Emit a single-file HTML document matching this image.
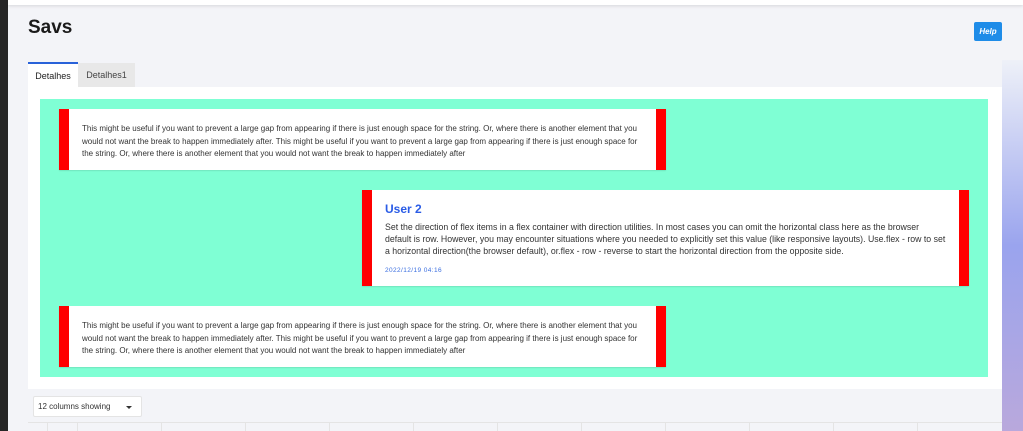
<!DOCTYPE html>
<html><head><meta charset="utf-8"><style>
*{margin:0;padding:0;box-sizing:border-box}
body{width:1023px;height:431px;overflow:hidden;background:#f3f4f8;font-family:"Liberation Sans",sans-serif;position:relative}
.abs{position:absolute}
.side{left:0;top:0;width:8px;height:431px;background:#262626}
.top{left:8px;top:0;width:1015px;height:5px;background:#fff;box-shadow:0 1px 3px rgba(0,0,0,.12)}
.grad{left:1002px;top:60px;width:21px;height:371px;background:linear-gradient(#eef1f8,#9aa4ee 50%,#b9a8dc)}
h1{position:absolute;left:28px;top:17px;font-size:19px;font-weight:bold;color:#1a1a1a}
.help{left:974px;top:22px;width:28px;height:19px;background:#1e8ce8;border-radius:2px;color:#fff;font-size:8px;font-weight:bold;font-style:italic;text-align:center;line-height:19px}
.tab1{left:28px;top:62px;width:50px;height:26px;background:#fff;border-top:2px solid #2962d9;font-size:9px;color:#222;text-align:center;line-height:24px}
.tab2{left:78px;top:63px;width:57px;height:25px;background:#e8e8e8;font-size:9px;color:#444;text-align:center;line-height:25px}
.panel{left:28px;top:87px;width:974px;height:302px;background:#fff}
.green{left:40px;top:99px;width:948px;height:278px;background:#7fffd4}
.card{position:absolute;background:#fff;border-left:10px solid #f00;border-right:10px solid #f00;width:607px;box-shadow:0 1px 1px rgba(0,0,0,.1)}
.t{font-size:8px;color:#333;line-height:12.5px;white-space:nowrap}
.u{font-size:12px;font-weight:bold;color:#2a5ce6}
.d{font-size:6.5px;color:#3b6fe0;letter-spacing:.4px}
.sel{left:33px;top:396px;width:109px;height:21px;background:#fff;border:1px solid #e4e4e4;border-radius:2px;font-size:8px;color:#333;line-height:20px;padding-left:4px}
.sel:after{content:"";position:absolute;right:9px;top:9px;border-left:3px solid transparent;border-right:3px solid transparent;border-top:3px solid #333}
.tbl{left:28px;top:422px;width:974px;height:9px;border-top:1px solid #e4e4e4}
.col{position:absolute;top:422px;height:9px;width:1px;background:#e4e4e4}
</style></head><body>
<div class="abs side"></div><div class="abs top"></div><div class="abs grad"></div>
<h1>Savs</h1>
<div class="abs help">Help</div>
<div class="abs tab1">Detalhes</div><div class="abs tab2">Detalhes1</div>
<div class="abs panel"></div>
<div class="abs green"></div>
<div class="card" style="left:59px;top:109px;height:61px;padding:14px 0 0 13px"><div class="t">This might be useful if you want to prevent a large gap from appearing if there is just enough space for the string. Or, where there is another element that you<br>would not want the break to happen immediately after. This might be useful if you want to prevent a large gap from appearing if there is just enough space for<br>the string. Or, where there is another element that you would not want the break to happen immediately after</div></div>
<div class="card" style="left:362px;top:190px;height:96px;padding:12px 0 0 13px"><div class="u">User 2</div><div class="t" style="font-size:8.75px;line-height:12.2px;margin-top:5px">Set the direction of flex items in a flex container with direction utilities. In most cases you can omit the horizontal class here as the browser<br>default is row. However, you may encounter situations where you needed to explicitly set this value (like responsive layouts). Use.flex - row to set<br>a horizontal direction(the browser default), or.flex - row - reverse to start the horizontal direction from the opposite side.</div><div class="d" style="margin-top:9px">2022/12/19 04:16</div></div>
<div class="card" style="left:59px;top:306px;height:61px;padding:14px 0 0 13px"><div class="t">This might be useful if you want to prevent a large gap from appearing if there is just enough space for the string. Or, where there is another element that you<br>would not want the break to happen immediately after. This might be useful if you want to prevent a large gap from appearing if there is just enough space for<br>the string. Or, where there is another element that you would not want the break to happen immediately after</div></div>
<div class="abs sel">12 columns showing</div>
<div class="abs tbl"></div>
<div class="col" style="left:47px"></div><div class="col" style="left:77px"></div><div class="col" style="left:161px"></div><div class="col" style="left:245px"></div><div class="col" style="left:329px"></div><div class="col" style="left:413px"></div><div class="col" style="left:497px"></div><div class="col" style="left:581px"></div><div class="col" style="left:665px"></div><div class="col" style="left:749px"></div><div class="col" style="left:833px"></div><div class="col" style="left:917px"></div>
</body></html>
